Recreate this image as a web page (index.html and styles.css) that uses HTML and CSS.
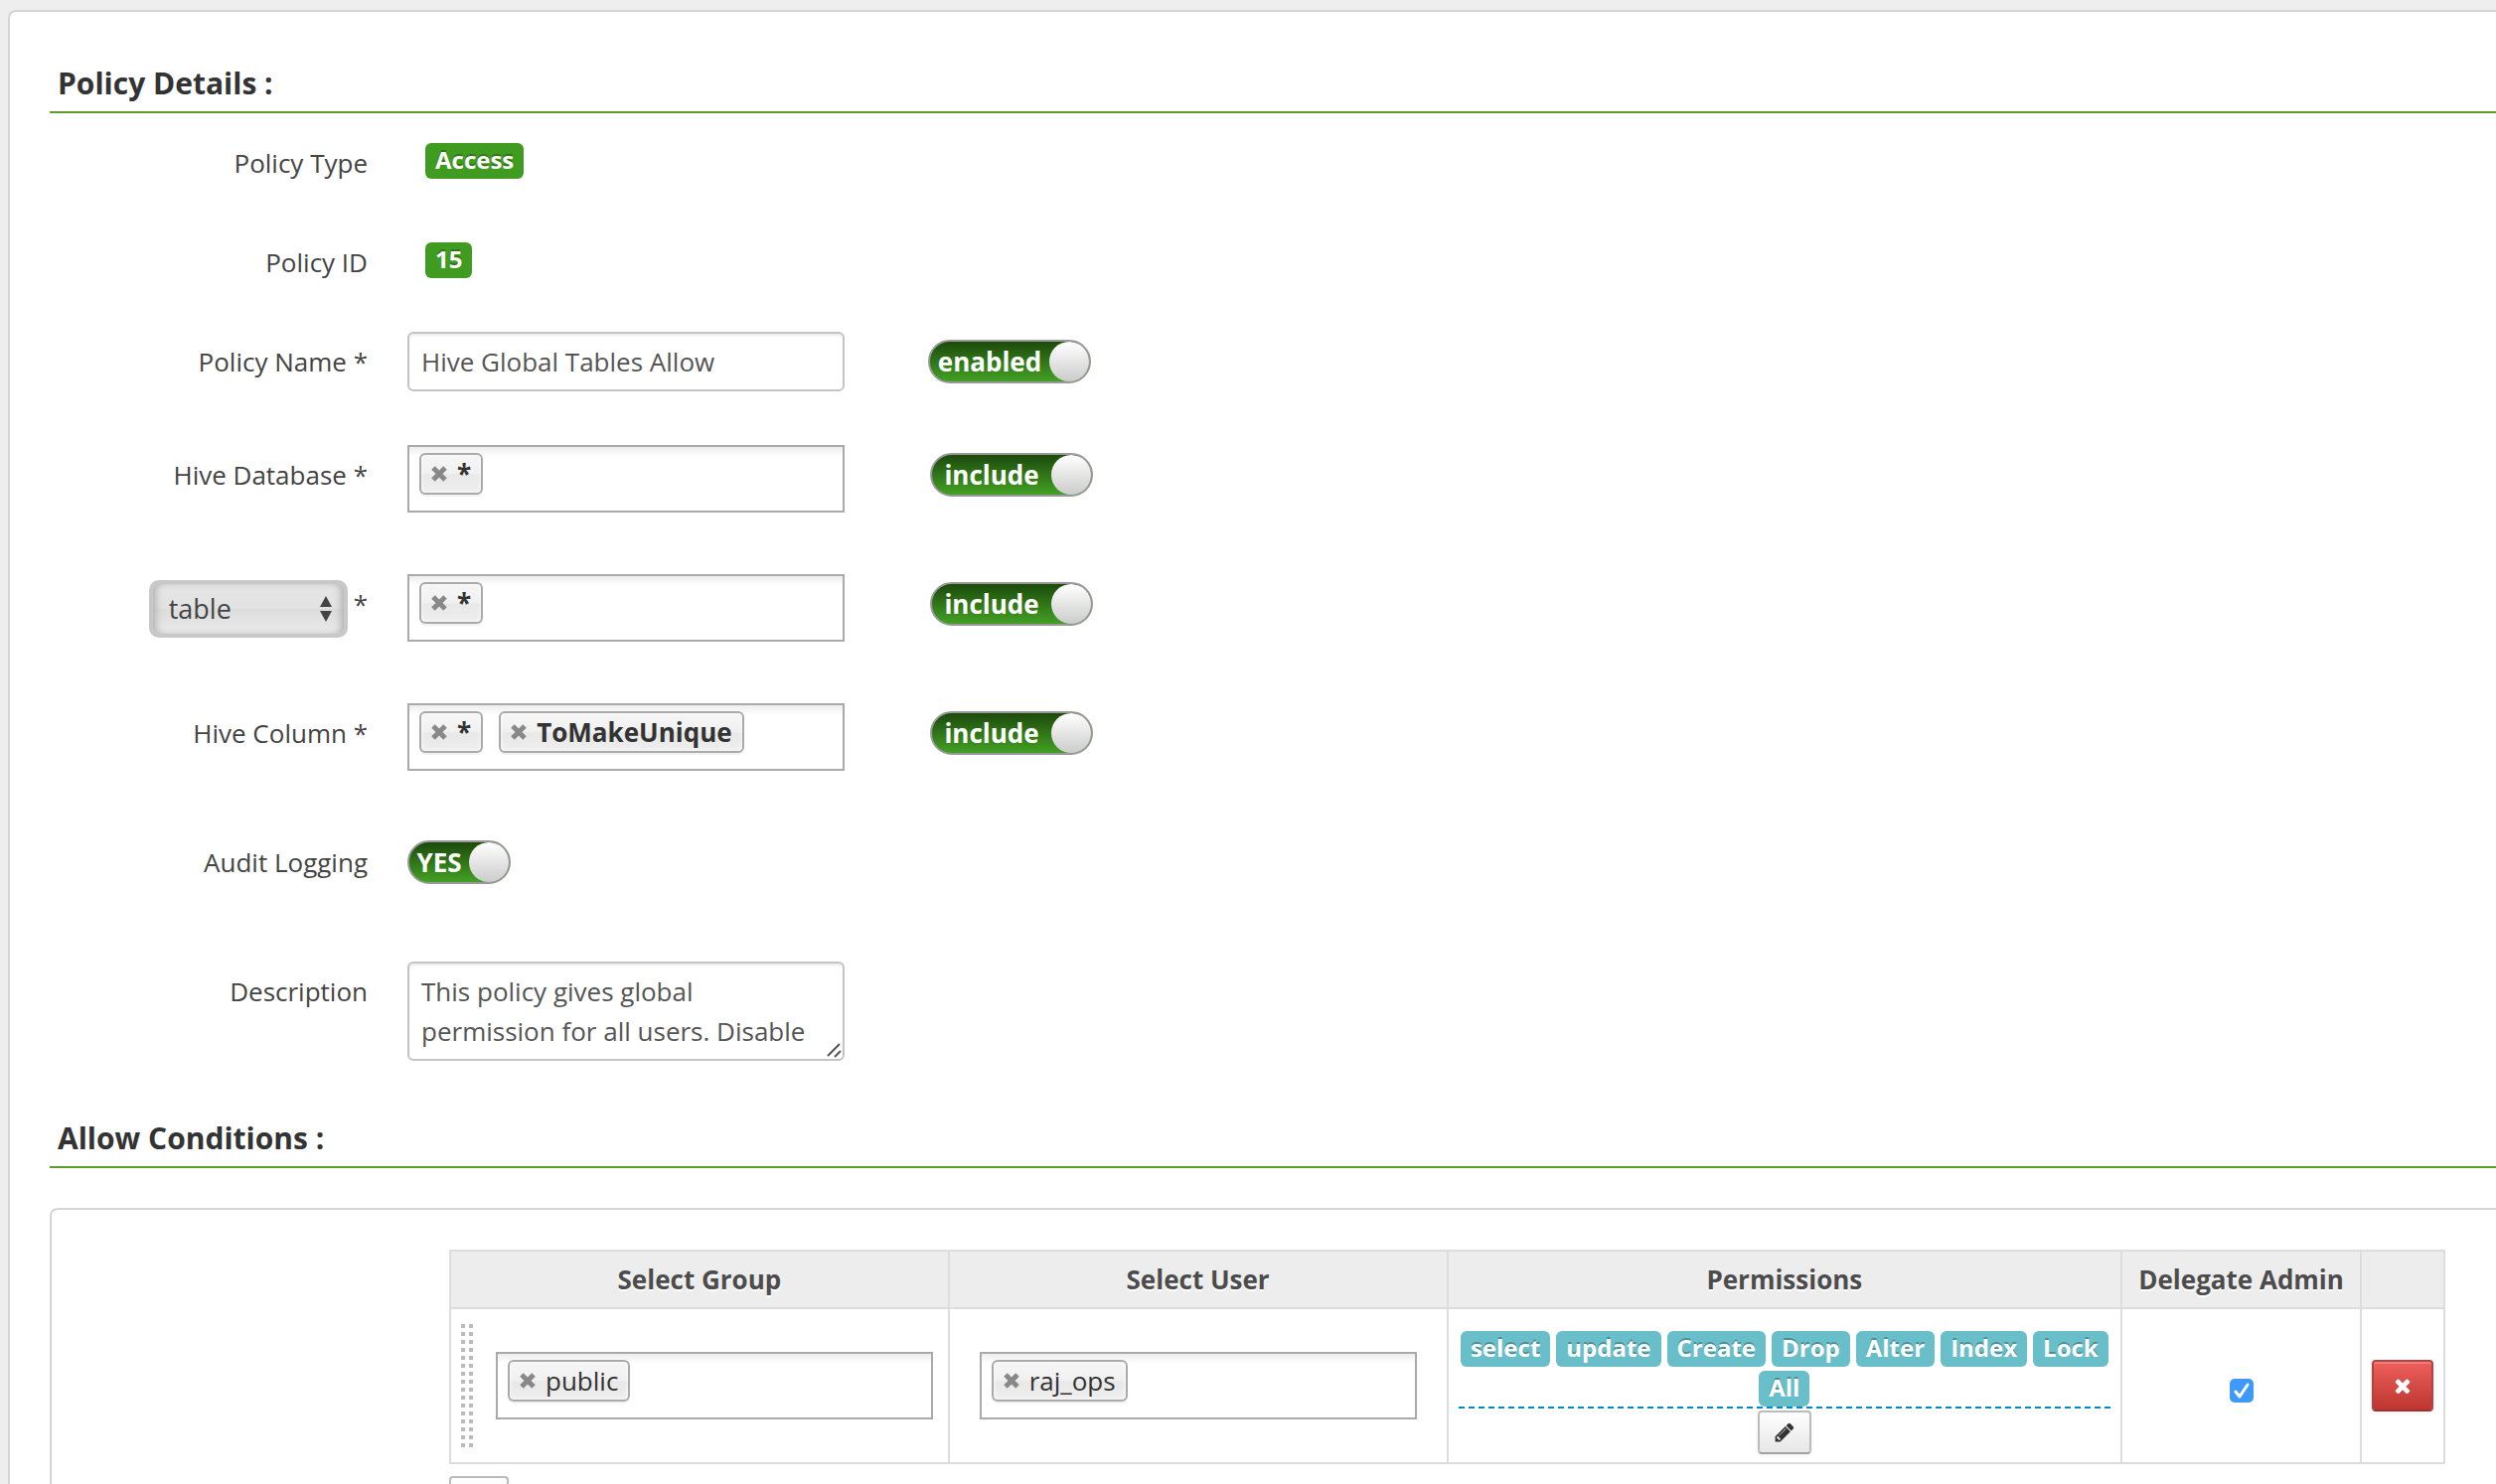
FILE: index.html
```
<!DOCTYPE html>
<html lang="en">
  <head>
    <meta charset="utf-8" />
    <meta name="viewport" content="width=device-width, initial-scale=1.0" />
    <title>Edit Policy</title>
    <link rel="stylesheet" href="styles.css" />
  </head>
  <body>
    <!-- shared icons -->
    <svg class="icon-defs" aria-hidden="true">
      <symbol id="icon-remove" viewBox="0 0 1792 1792">
        <path d="M1490 1322q0 40-28 68l-136 136q-28 28-68 28t-68-28l-294-294-294 294q-28 28-68 28t-68-28l-136-136q-28-28-28-68t28-68l294-294-294-294q-28-28-28-68t28-68l136-136q28-28 68-28t68 28l294 294 294-294q28-28 68-28t68 28l136 136q28 28 28 68t-28 68l-294 294 294 294q28 28 28 68z" />
      </symbol>
      <symbol id="icon-pencil" viewBox="0 0 1792 1792">
        <path d="M491 1536l91-91-235-235-91 91v107h128v128h107zm523-928q0-22-22-22-10 0-17 7l-542 542q-7 7-7 17 0 22 22 22 10 0 17-7l542-542q7-7 7-17zm-54-192l416 416-832 832h-416v-416zm683 96q0 53-37 90l-166 166-416-416 166-165q36-38 90-38 53 0 91 38l235 234q37 39 37 91z" />
      </symbol>
      <symbol id="icon-close" viewBox="0 0 16 16">
        <path d="M2 2l12 12M14 2L2 14" />
      </symbol>
    </svg>

    <form class="panel">
      <h2 class="section-title">Policy Details :</h2>

      <div class="control-group">
        <span class="control-label">Policy Type</span>
        <div class="controls"><span class="label label-success">Access</span></div>
      </div>

      <div class="control-group">
        <span class="control-label">Policy ID</span>
        <div class="controls"><span class="label label-success">15</span></div>
      </div>

      <div class="control-group name-group">
        <label class="control-label" for="policyName">Policy Name *</label>
        <div class="controls">
          <input class="text-input" type="text" id="policyName" value="Hive Global Tables Allow" />
        </div>
        <label class="toggle">
          <input type="checkbox" checked />
          <span class="toggle-text">enabled</span>
          <span class="toggle-knob"></span>
        </label>
      </div>

      <div class="control-group resource-group">
        <label class="control-label" for="database">Hive Database *</label>
        <div class="select2">
          <span class="chip chip-bold">
            <button type="button" aria-label="Remove"><svg><use href="#icon-close" /></svg></button>*
          </span>
          <input type="text" id="database" />
        </div>
        <label class="toggle">
          <input type="checkbox" checked />
          <span class="toggle-text">include</span>
          <span class="toggle-knob"></span>
        </label>
      </div>

      <div class="control-group resource-group">
        <div class="control-label resource-label">
          <span class="dropdown">
            <select aria-label="Resource type">
              <option selected>table</option>
            </select>
            <svg class="dropdown-arrows" viewBox="0 0 12 26" aria-hidden="true">
              <path d="M6 0l6 11H0zM6 26l6-11H0z" />
            </svg>
          </span>
          <label for="table">*</label>
        </div>
        <div class="select2">
          <span class="chip chip-bold">
            <button type="button" aria-label="Remove"><svg><use href="#icon-close" /></svg></button>*
          </span>
          <input type="text" id="table" />
        </div>
        <label class="toggle">
          <input type="checkbox" checked />
          <span class="toggle-text">include</span>
          <span class="toggle-knob"></span>
        </label>
      </div>

      <div class="control-group resource-group">
        <label class="control-label" for="column">Hive Column *</label>
        <div class="select2">
          <span class="chip chip-bold">
            <button type="button" aria-label="Remove"><svg><use href="#icon-close" /></svg></button>*
          </span>
          <span class="chip chip-bold">
            <button type="button" aria-label="Remove"><svg><use href="#icon-close" /></svg></button>ToMakeUnique
          </span>
          <input type="text" id="column" />
        </div>
        <label class="toggle">
          <input type="checkbox" checked />
          <span class="toggle-text">include</span>
          <span class="toggle-knob"></span>
        </label>
      </div>

      <div class="control-group resource-group">
        <label class="control-label" for="audit">Audit Logging</label>
        <div class="controls">
          <label class="toggle toggle-small">
            <input type="checkbox" id="audit" checked />
            <span class="toggle-text">YES</span>
            <span class="toggle-knob"></span>
          </label>
        </div>
      </div>

      <div class="control-group description-group">
        <label class="control-label" for="description">Description</label>
        <div class="controls textarea-wrap">
          <textarea class="text-input" id="description" rows="2">This policy gives global permission for all users. Disable</textarea>
          <svg class="grip" viewBox="0 0 16 16" aria-hidden="true">
            <path d="M2 14L14 2M9 15l6-6" />
          </svg>
        </div>
      </div>

      <h2 class="section-title">Allow Conditions :</h2>

      <div class="conditions">
        <table class="permission-table">
          <colgroup>
            <col class="col-quarter" />
            <col class="col-quarter" />
            <col />
            <col class="col-admin" />
            <col class="col-action" />
          </colgroup>
          <thead>
            <tr>
              <th>Select Group</th>
              <th>Select User</th>
              <th>Permissions</th>
              <th>Delegate Admin</th>
              <th></th>
            </tr>
          </thead>
          <tbody>
            <tr>
              <td>
                <div class="group-cell">
                  <span class="drag-handle"></span>
                  <div class="select2">
                    <span class="chip">
                      <button type="button" aria-label="Remove"><svg><use href="#icon-close" /></svg></button>public
                    </span>
                    <input type="text" aria-label="Select Group" />
                  </div>
                </div>
              </td>
              <td>
                <div class="select2 user-select">
                  <span class="chip">
                    <button type="button" aria-label="Remove"><svg><use href="#icon-close" /></svg></button>raj_ops
                  </span>
                  <input type="text" aria-label="Select User" />
                </div>
              </td>
              <td class="permission-cell">
                <div class="permission-list">
                  <span class="label label-info">select</span>
                  <span class="label label-info">update</span>
                  <span class="label label-info">Create</span>
                  <span class="label label-info">Drop</span>
                  <span class="label label-info">Alter</span>
                  <span class="label label-info">Index</span>
                  <span class="label label-info">Lock</span>
                  <span class="label label-info">All</span>
                </div>
                <button type="button" class="btn btn-edit" aria-label="Edit permissions">
                  <svg><use href="#icon-pencil" /></svg>
                </button>
              </td>
              <td>
                <input type="checkbox" class="admin-check" aria-label="Delegate Admin" checked />
              </td>
              <td>
                <button type="button" class="btn btn-danger" aria-label="Delete">
                  <svg><use href="#icon-remove" /></svg>
                </button>
              </td>
            </tr>
          </tbody>
        </table>
        <button type="button" class="btn btn-add" aria-label="Add condition"></button>
      </div>
    </form>
  </body>
</html>
```
FILE: styles.css
```
* {
  box-sizing: border-box;
}

body {
  margin: 0;
  padding: 10px 0 0 8px;
  height: 100vh;
  overflow: hidden;
  background-color: #eee;
  font-family: "Open Sans", "Helvetica Neue", Arial, sans-serif;
  font-size: 26px;
  line-height: 40px;
  color: #444;
}

input,
select,
textarea,
button {
  font: inherit;
  color: inherit;
}

.icon-defs {
  display: none;
}

.panel {
  min-height: 100%;
  padding: 52px 0 0 40px;
  background-color: #fff;
  border: 2px solid #d4d4d4;
  border-width: 2px 0 0 2px;
  border-radius: 8px 0 0 0;
}

.section-title {
  margin: 0 0 20px;
  padding: 0 8px 8px;
  border-bottom: 2px solid #5f9f28;
  font-size: 30px;
  line-height: 40px;
  font-weight: 700;
  color: #333;
}

/* form rows */
.control-group {
  display: grid;
  grid-template-columns: 320px 440px auto;
  column-gap: 40px;
  justify-content: start;
  align-items: start;
  min-height: 60px;
  margin-bottom: 40px;
}

.name-group {
  margin-bottom: 54px;
}

.description-group {
  margin-bottom: 58px;
}

.resource-group {
  min-height: 68px;
  margin-bottom: 62px;
}

.control-label {
  padding-top: 10px;
  text-align: right;
}

.resource-label {
  display: flex;
  justify-content: flex-end;
  gap: 6px;
  padding-top: 6px;
}

.resource-label label {
  padding-top: 4px;
}

.text-input {
  display: block;
  width: 100%;
  padding: 8px 12px;
  border: 2px solid #c4c4c4;
  border-radius: 6px;
  background-color: #fff;
  box-shadow: inset 0 2px 2px rgba(0, 0, 0, 0.08);
  line-height: 40px;
  color: #555;
}

textarea.text-input {
  resize: none;
  overflow: hidden;
}

.textarea-wrap {
  position: relative;
}

.grip {
  position: absolute;
  right: 3px;
  bottom: 3px;
  width: 16px;
  height: 16px;
  fill: none;
  stroke: #555;
  stroke-width: 2;
}

/* badges */
.label {
  display: inline-block;
  padding: 3px 10px 5px;
  border-radius: 6px;
  font-size: 24px;
  line-height: 28px;
  font-weight: 700;
  color: #fff;
  text-shadow: 0 -2px 0 rgba(0, 0, 0, 0.25);
  vertical-align: top;
}

.label-success {
  margin: 10px 0 0 18px;
  background-color: #3f9c20;
}

.label-info {
  background-color: #68bfc9;
}

/* tag boxes */
.select2 {
  display: flex;
  gap: 16px;
  width: 440px;
  height: 68px;
  padding: 6px 10px;
  border: 2px solid #aaa;
  background: #fff linear-gradient(to bottom, #eee 1%, #fff 15%);
}

.select2 input {
  flex: 1;
  min-width: 0;
  height: 42px;
  padding: 0;
  border: 0;
  background: none;
  outline: 0;
}

.chip {
  display: flex;
  align-items: center;
  gap: 10px;
  height: 42px;
  padding: 0 10px;
  border: 2px solid #aaa;
  border-radius: 6px;
  background: linear-gradient(to bottom, #f4f4f4 20%, #f0f0f0 50%, #e8e8e8 52%, #eee 100%);
  box-shadow: 0 0 4px #fff inset, 0 2px 0 rgba(0, 0, 0, 0.05);
  line-height: 26px;
  color: #333;
}

.chip-bold {
  font-weight: 700;
}

.chip button {
  display: flex;
  padding: 0;
  border: 0;
  background: none;
}

.chip svg {
  width: 16px;
  height: 16px;
  stroke: #888;
  stroke-width: 5;
}

/* resource type dropdown */
.dropdown {
  position: relative;
}

.dropdown select {
  display: block;
  appearance: none;
  width: 200px;
  height: 58px;
  padding: 0 40px 0 16px;
  border: 4px solid #c8c8c8;
  border-radius: 10px;
  background: linear-gradient(to bottom, #e6e6e6, #e2e2e2 50%, #dcdcdc 51%, #ebebeb);
  box-shadow: inset 6px 0 8px -4px #aaa, inset -6px 0 8px -4px #aaa;
  font-size: 27px;
}

.dropdown-arrows {
  position: absolute;
  top: 16px;
  right: 16px;
  width: 12px;
  height: 26px;
  fill: #444;
  pointer-events: none;
}

/* switches */
.toggle {
  position: relative;
  display: flex;
  width: 164px;
  height: 44px;
  margin: 8px 0 0 44px;
  border: 2px solid #999;
  border-radius: 22px;
  background: linear-gradient(to bottom, #1c4a0c, #43a024);
  color: #fff;
  font-weight: 700;
}

.resource-group .toggle {
  margin-left: 46px;
}

.toggle input {
  position: absolute;
  opacity: 0;
}

.toggle-text {
  flex: 1;
  text-align: center;
}

.toggle-knob {
  width: 40px;
  border-radius: 50%;
  background: linear-gradient(to bottom, #fff, #ccc);
}

.resource-group .toggle-small {
  width: 104px;
  margin-left: 0;
}

/* allow conditions */
.conditions {
  margin-top: 40px;
  padding: 40px 51px 60px 400px;
  border: 2px solid #d4d4d4;
  border-width: 2px 0 0 2px;
  border-radius: 8px 0 0 0;
}

.permission-table {
  width: 100%;
  table-layout: fixed;
  border-collapse: collapse;
}

.permission-table th,
.permission-table td {
  padding: 8px;
  border: 2px solid #ddd;
  text-align: center;
  vertical-align: middle;
}

.permission-table th {
  background-color: #ededed;
  line-height: 40px;
  font-weight: 700;
  color: #4c4c4c;
  text-shadow: 0 2px 0 #fff;
}

.col-quarter {
  width: 25%;
}

.col-admin {
  width: 12%;
}

.col-action {
  width: 84px;
}

.group-cell {
  display: flex;
  align-items: center;
  gap: 23px;
}

.drag-handle {
  width: 12px;
  height: 124px;
  margin-left: 2px;
  background: conic-gradient(#bbb 25%, transparent 0) 4px 0 / 8px 8px;
}

.user-select {
  margin: 0 auto;
}

.permission-table td.permission-cell {
  padding: 22px 10px 8px;
}

.permission-list {
  display: flex;
  flex-wrap: wrap;
  justify-content: center;
  gap: 4px 6px;
  margin-bottom: 2px;
  border-bottom: 2px dashed #08c;
}

.btn {
  display: inline-flex;
  align-items: center;
  justify-content: center;
  padding: 0;
  border: 2px solid #bbb;
  border-bottom-color: #a2a2a2;
  border-radius: 4px;
  background: linear-gradient(to bottom, #fff, #e6e6e6);
  box-shadow: 0 2px 4px rgba(0, 0, 0, 0.05);
  vertical-align: middle;
}

.btn-edit {
  width: 54px;
  height: 44px;
  vertical-align: top;
}

.btn-edit svg {
  width: 22px;
  height: 22px;
  fill: #333;
}

.btn-danger {
  width: 62px;
  height: 52px;
  border-color: #b94040 #b94040 #a33030;
  background: linear-gradient(to bottom, #ee5f5b, #bd362f);
  box-shadow: inset 0 2px 0 rgba(255, 255, 255, 0.2), 0 2px 4px rgba(0, 0, 0, 0.05);
}

.btn-danger svg {
  width: 22px;
  height: 22px;
  fill: #fff;
}

.btn-add {
  width: 60px;
  height: 52px;
  margin-top: 12px;
}

.admin-check {
  appearance: none;
  width: 24px;
  height: 24px;
  margin: 4px 0 0;
  border-radius: 5px;
  background-color: #3f99fb;
  vertical-align: middle;
}

.admin-check:checked {
  background-image: url("data:image/svg+xml,%3Csvg xmlns='http://www.w3.org/2000/svg' viewBox='0 0 24 24'%3E%3Cpath d='M6 13l4 5L18 6' fill='none' stroke='white' stroke-width='3' stroke-linecap='round' stroke-linejoin='round'/%3E%3C/svg%3E");
}
```
